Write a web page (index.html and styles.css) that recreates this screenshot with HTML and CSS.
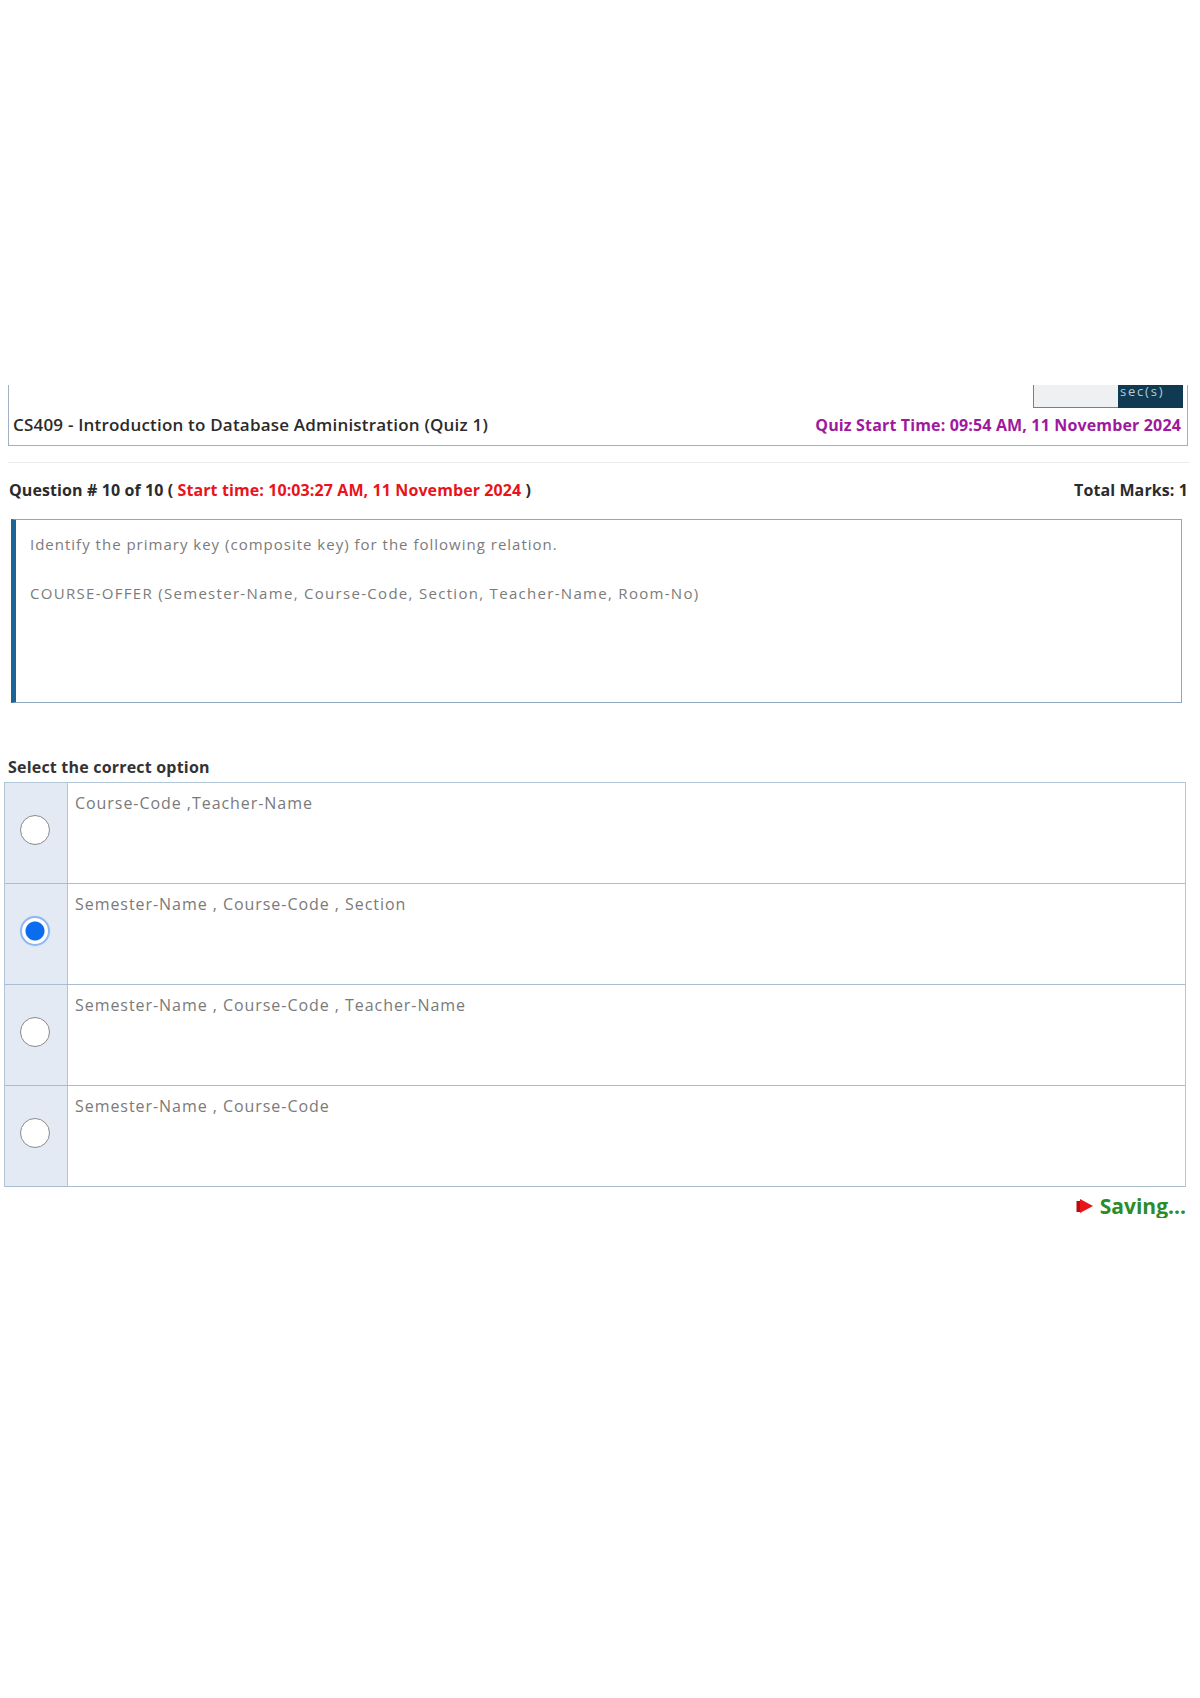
FILE: index.html
```html
<!DOCTYPE html>
<html lang="en">
<head>
<meta charset="utf-8">
<title>CS409 Quiz 1</title>
<link rel="stylesheet" href="styles.css">
</head>
<body>
<div class="page">
  <div class="quiz-header">
    <div class="timer-row">
      <div class="timer"><span class="timer-input"></span><span class="timer-unit">sec(s)</span></div>
    </div>
    <div class="title-row">
      <span class="course-title">CS409 - Introduction to Database Administration (Quiz 1)</span>
      <span class="quiz-start">Quiz Start Time: 09:54 AM, 11 November 2024</span>
    </div>
  </div>
  <div class="divider"></div>
  <div class="question-row">
    <span class="q-num">Question # 10 of 10 ( <span class="q-start">Start time: 10:03:27 AM, 11 November 2024</span> )</span>
    <span class="total">Total Marks: 1</span>
  </div>
  <div class="question-box">
    <p class="q-text">Identify the primary key (composite key) for the following relation.</p>
    <p class="q-text q-relation">COURSE-OFFER (Semester-Name, Course-Code, Section, Teacher-Name, Room-No)</p>
  </div>
  <div class="select-label">Select the correct option</div>
  <div class="options">
    <div class="option">
      <div class="opt-radio"><span class="radio"></span></div>
      <div class="opt-text">Course-Code ,Teacher-Name</div>
    </div>
    <div class="option">
      <div class="opt-radio"><span class="radio checked"></span></div>
      <div class="opt-text">Semester-Name , Course-Code , Section</div>
    </div>
    <div class="option">
      <div class="opt-radio"><span class="radio"></span></div>
      <div class="opt-text">Semester-Name , Course-Code , Teacher-Name</div>
    </div>
    <div class="option">
      <div class="opt-radio"><span class="radio"></span></div>
      <div class="opt-text">Semester-Name , Course-Code</div>
    </div>
  </div>
  <div class="saving">
    <svg class="saving-icon" width="18" height="18" viewBox="0 0 18 18" aria-hidden="true">
      <rect x="0.5" y="4" width="4" height="11" fill="#b80d0d"/>
      <path d="M4 2 L17 9 L4 16 Z" fill="#e8141b"/>
    </svg>
    <span class="saving-text">Saving...</span>
  </div>
</div>
</body>
</html>
```
FILE: styles.css
```css
html, body {
  margin: 0;
  padding: 0;
  background: #ffffff;
}

body {
  font-family: "Open Sans", "Liberation Sans", sans-serif;
  color: #2b2b2b;
}

.page {
  width: 1200px;
}

/* Header box */
.quiz-header {
  margin: 385px 0 0 8px;
  width: 1180px;
  box-sizing: border-box;
  border-left: 1px solid #9fb2c4;
  border-right: 1px solid #9fb2c4;
  border-bottom: 1px solid #9fb2c4;
  padding-right: 4px;
}

.timer-row {
  display: flex;
  justify-content: flex-end;
  height: 23px;
}

.timer {
  display: flex;
  height: 23px;
}

.timer-input {
  width: 84px;
  background: #eef0f2;
  border-left: 1px solid #7b7f84;
  border-bottom: 1px solid #7b7f84;
}

.timer-unit {
  width: 65px;
  box-sizing: border-box;
  padding-left: 2px;
  background: #0f3a52;
  color: #b9cad8;
  font-size: 13px;
  line-height: 13px;
  letter-spacing: 1.8px;
}

.title-row {
  display: flex;
  justify-content: space-between;
  align-items: center;
  height: 37px;
  padding: 0 2px 4px 4px;
  box-sizing: border-box;
}

.course-title {
  font-size: 17px;
  font-weight: 600;
  letter-spacing: 0.2px;
  color: #2b2b2b;
}

.quiz-start {
  font-size: 16px;
  font-weight: 700;
  letter-spacing: 0.15px;
  color: #a0189e;
}

.divider {
  margin: 16px 10px 0 8px;
  height: 1px;
  background: #ececec;
}

/* Question line */
.question-row {
  display: flex;
  justify-content: space-between;
  align-items: center;
  margin: 16px 12px 0 9px;
  height: 22px;
  font-size: 16px;
  font-weight: 700;
  letter-spacing: 0.1px;
  color: #2b2b2b;
}

.q-start {
  color: #e8141b;
}

.question-box {
  margin: 18px 18px 0 11px;
  height: 184px;
  box-sizing: border-box;
  border: 1px solid #8fa8c0;
  border-left: 5px solid #1d6496;
  padding: 14px 0 0 14px;
}

.q-text {
  margin: 0 0 29px 0;
  font-size: 15px;
  line-height: 20px;
  letter-spacing: 1px;
  color: #7b7b7b;
}

.q-text.q-relation {
  letter-spacing: 1.3px;
}

.select-label {
  margin: 54px 0 0 8px;
  font-size: 16px;
  line-height: 20px;
  font-weight: 700;
  letter-spacing: 0.2px;
  color: #333333;
}

/* Options table */
.options {
  margin: 5px 14px 0 4px;
  border: 1px solid #b3c6d8;
  border-bottom: none;
}

.option {
  display: flex;
  height: 101px;
  box-sizing: border-box;
  border-bottom: 1px solid #a9bdd1;
}

.opt-radio {
  width: 63px;
  flex: none;
  background: #e3eaf3;
  border-right: 1px solid #b3c6d8;
  display: flex;
  justify-content: center;
  padding: 32px 2px 0 0;
  box-sizing: border-box;
}

.radio {
  width: 30px;
  height: 30px;
  box-sizing: border-box;
  border-radius: 50%;
  border: 1.5px solid #8a8a8a;
  background: #ffffff;
}

.radio.checked {
  border: 2px solid #8fb6f0;
  background: radial-gradient(circle, #0b6cf0 0 9px, #ffffff 10px);
  box-shadow: 0 0 0 1px #d6e6fb;
}

.opt-text {
  padding: 10px 0 0 7px;
  font-size: 16px;
  line-height: 20px;
  color: #7a7a7a;
  letter-spacing: 0.95px;
}

/* Saving indicator */
.saving {
  display: flex;
  justify-content: flex-end;
  align-items: center;
  gap: 6px;
  margin: 7px 14px 0 0;
  height: 24px;
}

.saving-icon {
  display: block;
}

.saving-text {
  font-size: 21px;
  font-weight: 700;
  color: #2a8c2a;
  line-height: 24px;
}
```
